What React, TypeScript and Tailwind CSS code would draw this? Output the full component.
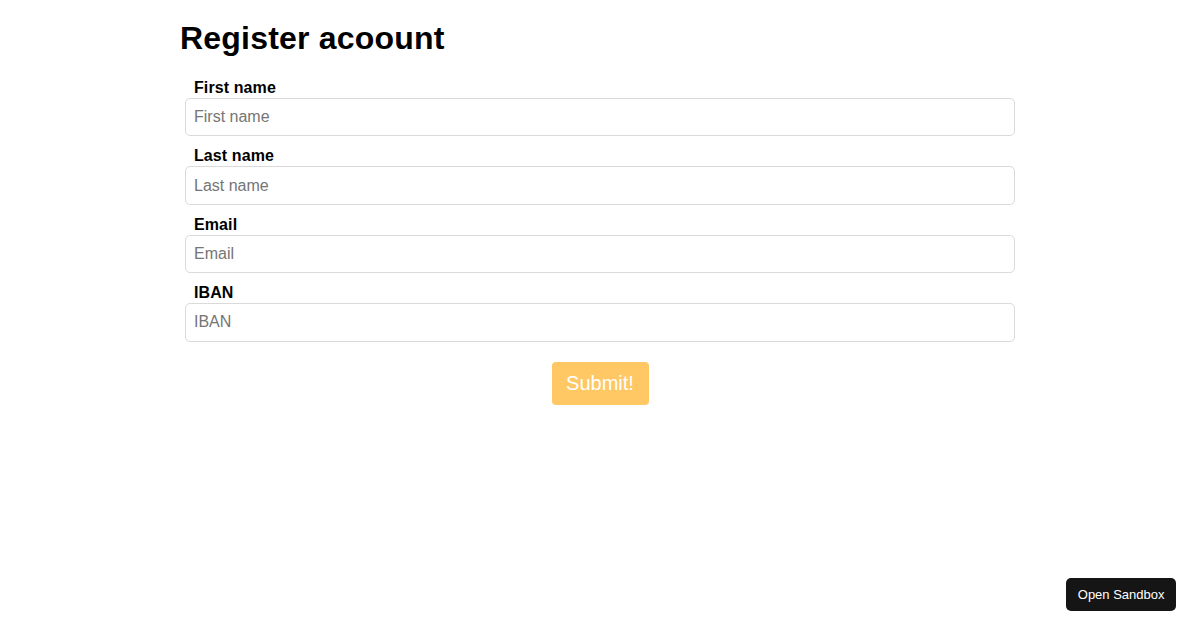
import React from "react";

const fields = [
  { label: "First name", placeholder: "First name" },
  { label: "Last name", placeholder: "Last name" },
  { label: "Email", placeholder: "Email" },
  { label: "IBAN", placeholder: "IBAN" },
];

export default function App() {
  return (
    <div className="min-h-[630px] bg-white font-['Liberation_Sans',Arial,sans-serif] text-black">
      <div className="mx-auto w-[840px]">
        <h1 className="pt-[20px] text-[32px] font-bold leading-[37px] tracking-[0.2px]">Register acoount</h1>
        <form className="mt-[21px] flex flex-col px-[5px]" onSubmit={(e) => e.preventDefault()}>
          {fields.map((f) => (
            <div key={f.label} className="mb-[10px] flex flex-col">
              <label className="pl-[9px] text-[16px] font-bold leading-[20px] tracking-[0.1px]">{f.label}</label>
              <input
                placeholder={f.placeholder}
                className="h-[38.4px] w-full rounded-[5px] border border-[#dadada] px-[8px] text-[16px] outline-none placeholder:text-[#757575]"
              />
            </div>
          ))}
          <div className="mt-[10px] flex justify-center">
            <button
              type="submit"
              className="h-[43.5px] w-[97px] rounded-[4px] bg-[#ffc864] text-[20px] leading-[23px] text-white"
            >
              Submit!
            </button>
          </div>
        </form>
      </div>
      <button className="fixed bottom-[19px] right-[24px] h-[33px] rounded-[5px] bg-[#151515] px-[11.5px] text-[13px] text-white">
        Open Sandbox
      </button>
    </div>
  );
}
